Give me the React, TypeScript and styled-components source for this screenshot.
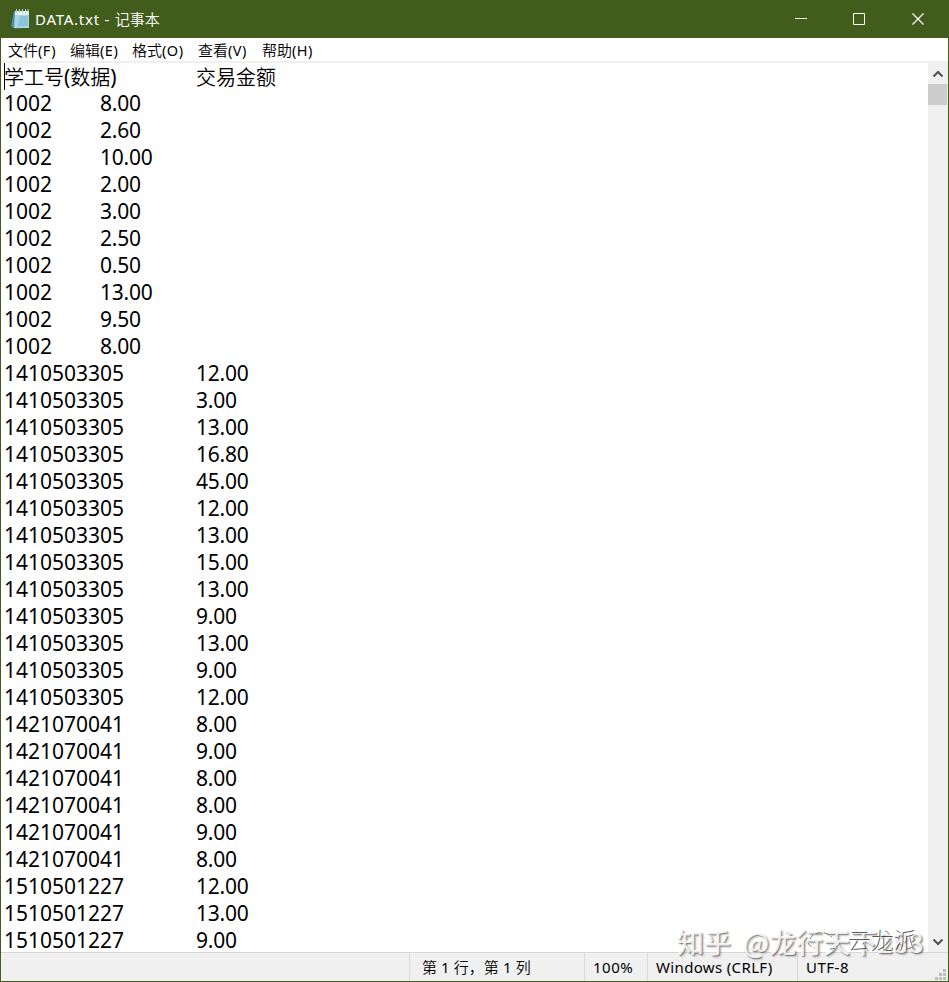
import React from "react";
import styled, { createGlobalStyle } from "styled-components";

const Global = createGlobalStyle`
  html, body { margin: 0; padding: 0; overflow: hidden; }
  * { box-sizing: border-box; }
`;

const Window = styled.div`
  position: relative;
  width: 949px;
  height: 982px;
  display: flex;
  flex-direction: column;
  background: #fff;
  border: 1px solid #415c1b;
  border-top: 0;
  border-bottom: 1px solid #415c1b;
  font-family: "Noto Sans", "Noto Sans CJK SC", sans-serif;
  color: #000;
  overflow: hidden;
`;

const TitleBar = styled.header`
  display: flex;
  align-items: center;
  flex: 0 0 38px;
  margin: 0 -1px;
  padding: 0 2px 0 10px;
  background: #415c1b;
  color: #fff;
`;

const Title = styled.div`
  display: flex;
  flex: 1;
  align-items: baseline;
  margin-left: 4px;
  font-size: 14px;
  line-height: 20px;
  white-space: pre;
`;

const Latin = styled.span<{ $size: number; $spacing?: number }>`
  font-size: ${(p) => p.$size}px;
  letter-spacing: ${(p) => p.$spacing ?? 0}px;
`;

const Han = styled.span<{ $size: number }>`
  font-family: "Noto Sans CJK SC", sans-serif;
  font-weight: 350;
  font-size: ${(p) => p.$size}px;
`;

const CaptionButton = styled.div`
  display: flex;
  align-items: center;
  justify-content: center;
  width: 58.5px;
  height: 38px;
`;

const MenuBar = styled.nav`
  display: flex;
  flex: none;
  height: 25px;
  padding-left: 7px;
  border-bottom: 2px solid #f0f0f0;
`;

const MenuItem = styled.div<{ $width: number }>`
  display: flex;
  align-items: baseline;
  width: ${(p) => p.$width}px;
  height: 23px;
  line-height: 23px;
  white-space: pre;
`;

const Main = styled.main`
  display: flex;
  flex: 1;
  min-height: 0;
`;

const TextArea = styled.div`
  flex: 1;
  padding-left: 3px;
`;

const Line = styled.div`
  display: flex;
  align-items: baseline;
  height: 27px;
  line-height: 27px;
  font-size: 21px;
`;

const Cell = styled.span<{ $width: number }>`
  display: flex;
  align-items: baseline;
  width: ${(p) => p.$width}px;
  white-space: pre;
`;

const Caret = styled.i`
  width: 1px;
  height: 27px;
  margin-right: -1px;
  background: #000;
  align-self: flex-start;
`;

const ScrollBar = styled.aside`
  display: flex;
  flex-direction: column;
  width: 20px;
  padding-right: 1px;
  background: #f0f0f0;
`;

const ScrollArrow = styled.div`
  display: flex;
  align-items: center;
  justify-content: center;
  height: 21px;
`;

const Thumb = styled.div`
  height: 21px;
  margin-bottom: auto;
  background: #cdcdcd;
`;

const StatusBar = styled.footer`
  display: flex;
  flex: 0 0 29px;
  border-top: 1px solid #d7d7d7;
  background: #f0f0f0;
`;

const StatusCell = styled.div<{ $width: number; $pad: number }>`
  display: flex;
  align-items: baseline;
  width: ${(p) => p.$width}px;
  height: 28px;
  padding-left: ${(p) => p.$pad}px;
  border-right: 1px solid #d9d9d9;
  line-height: 28px;
  font-size: 15px;
  white-space: pre;
  &:last-of-type { border-right: 0; }
`;

const Grip = styled.svg`
  margin: auto 2px 1px auto;
`;

const Watermark = styled.div`
  position: absolute;
  left: 676px;
  top: 924px;
  font: 500 27px/36px "Noto Sans CJK SC", sans-serif;
  word-spacing: 6px;
  color: rgba(255, 255, 255, 0.85);
  text-shadow: 1px 1px 1px rgba(0, 0, 0, 0.38), 2px 2px 2px rgba(0, 0, 0, 0.2);
  white-space: pre;
`;

const Stamp = styled.div`
  position: absolute;
  left: 804px;
  top: 924px;
  display: flex;
  align-items: center;
  font: 300 23px/32px "Noto Sans CJK SC", sans-serif;
  color: rgba(255, 255, 255, 0.6);
  text-shadow: -1px -1px 0 rgba(40, 40, 40, 0.75);
`;

const Pages = () => (
  <svg width="21" height="22" viewBox="0 0 21 22">
    <path d="M4 3 1 18l3 2.500 13-.5z" fill="#4f8ca3" />
    <path d="M5 3h14v17H4z" fill="#a9d4e6" />
    <path d="M5 3h14v4H5z" fill="#e2f3f7" />
    <path d="M10 8h8v10H8z" fill="#78b8d6" opacity=".6" />
    <path d="M6.500 1v4M9.500 1v4M12.500 1v4M15.500 1v4M18 1v4" stroke="#c3d0cb" />
  </svg>
);

const menus = [
  { name: "文件", key: "(F)", width: 62 },
  { name: "编辑", key: "(E)", width: 62 },
  { name: "格式", key: "(O)", width: 66 },
  { name: "查看", key: "(V)", width: 64 },
  { name: "帮助", key: "(H)", width: 64 },
];

const groups: { id: string; column: number; amounts: string[] }[] = [
  { id: "1002", column: 96, amounts: ["8.00", "2.60", "10.00", "2.00", "3.00", "2.50", "0.50", "13.00", "9.50", "8.00"] },
  { id: "1410503305", column: 192, amounts: ["12.00", "3.00", "13.00", "16.80", "45.00", "12.00", "13.00", "15.00", "13.00", "9.00", "13.00", "9.00", "12.00"] },
  { id: "1421070041", column: 192, amounts: ["8.00", "9.00", "8.00", "8.00", "9.00", "8.00"] },
  { id: "1510501227", column: 192, amounts: ["12.00", "13.00", "9.00"] },
];

export default function App() {
  return (
    <>
      <Global />
      <Window>
        <TitleBar>
          <Pages />
          <Title>
            <Latin $size={15} $spacing={0.75}>DATA.txt - </Latin>
            <Han $size={15}>记事本</Han>
          </Title>
          <CaptionButton>
            <svg width="12" height="12"><path d="M0 5.500h12" stroke="#fff" /></svg>
          </CaptionButton>
          <CaptionButton>
            <svg width="12" height="12"><path d="M.5.5h11v11H.5z" stroke="#fff" fill="none" /></svg>
          </CaptionButton>
          <CaptionButton>
            <svg width="12" height="12"><path d="m.5.5 11 11m0-11-11 11" stroke="#fff" fill="none" strokeWidth="1.200" /></svg>
          </CaptionButton>
        </TitleBar>
        <MenuBar>
          {menus.map((m) => (
            <MenuItem key={m.name} $width={m.width}>
              <Han $size={15}>{m.name}</Han>
              <Latin $size={14.5} $spacing={0.5}>{m.key}</Latin>
            </MenuItem>
          ))}
        </MenuBar>
        <Main>
          <TextArea>
            <Line>
              <Caret />
              <Cell $width={192}>
                <Han $size={20}>学工号</Han>
                <Latin $size={21}>(</Latin>
                <Han $size={20}>数据</Han>
                <Latin $size={21}>)</Latin>
              </Cell>
              <Han $size={20}>交易金额</Han>
            </Line>
            {groups.flatMap((g) =>
              g.amounts.map((amount, i) => (
                <Line key={g.id + i}>
                  <Cell $width={g.column}>{g.id}</Cell>
                  <Latin $size={21} $spacing={-0.2}>{amount}</Latin>
                </Line>
              )),
            )}
          </TextArea>
          <ScrollBar>
            <ScrollArrow>
              <svg width="12" height="8"><path d="m1.500 6.500 4.500-4.500 4.500 4.500" stroke="#505050" strokeWidth="2" fill="none" /></svg>
            </ScrollArrow>
            <Thumb />
            <ScrollArrow>
              <svg width="12" height="8"><path d="m1.500 1.500 4.500 4.500 4.500-4.500" stroke="#505050" strokeWidth="2" fill="none" /></svg>
            </ScrollArrow>
          </ScrollBar>
        </Main>
        <StatusBar>
          <StatusCell $width={409} $pad={0} />
          <StatusCell $width={175} $pad={12}>
            <Han $size={15}>第</Han><Latin $size={15} $spacing={0.15}> 1 </Latin><Han $size={15}>行，第</Han><Latin $size={15} $spacing={0.15}> 1 </Latin><Han $size={15}>列</Han>
          </StatusCell>
          <StatusCell $width={63} $pad={8}><Latin $size={15} $spacing={0.5}>100%</Latin></StatusCell>
          <StatusCell $width={150} $pad={8}><Latin $size={15} $spacing={0.35}>Windows (CRLF)</Latin></StatusCell>
          <StatusCell $width={100} $pad={8}><Latin $size={15} $spacing={0.5}>UTF-8</Latin></StatusCell>
          <Grip width="11" height="11" fill="#bdbdbd">
            <path d="M8 0h3v3H8zM4 4h3v3H4zM8 4h3v3H8zM0 8h3v3H0zM4 8h3v3H4zM8 8h3v3H8z" />
          </Grip>
        </StatusBar>
        <Watermark>知乎 @龙行天下288</Watermark>
        <Stamp>
          <svg width="44" height="30" fill="none" stroke="#777"><path d="M5 14c3-7 15-9 22-2M3 18c2 4 5 4 7 5M25 24c5 0 8-2 10-6" strokeDasharray="5 3" /></svg>
          云龙派
        </Stamp>
      </Window>
    </>
  );
}
